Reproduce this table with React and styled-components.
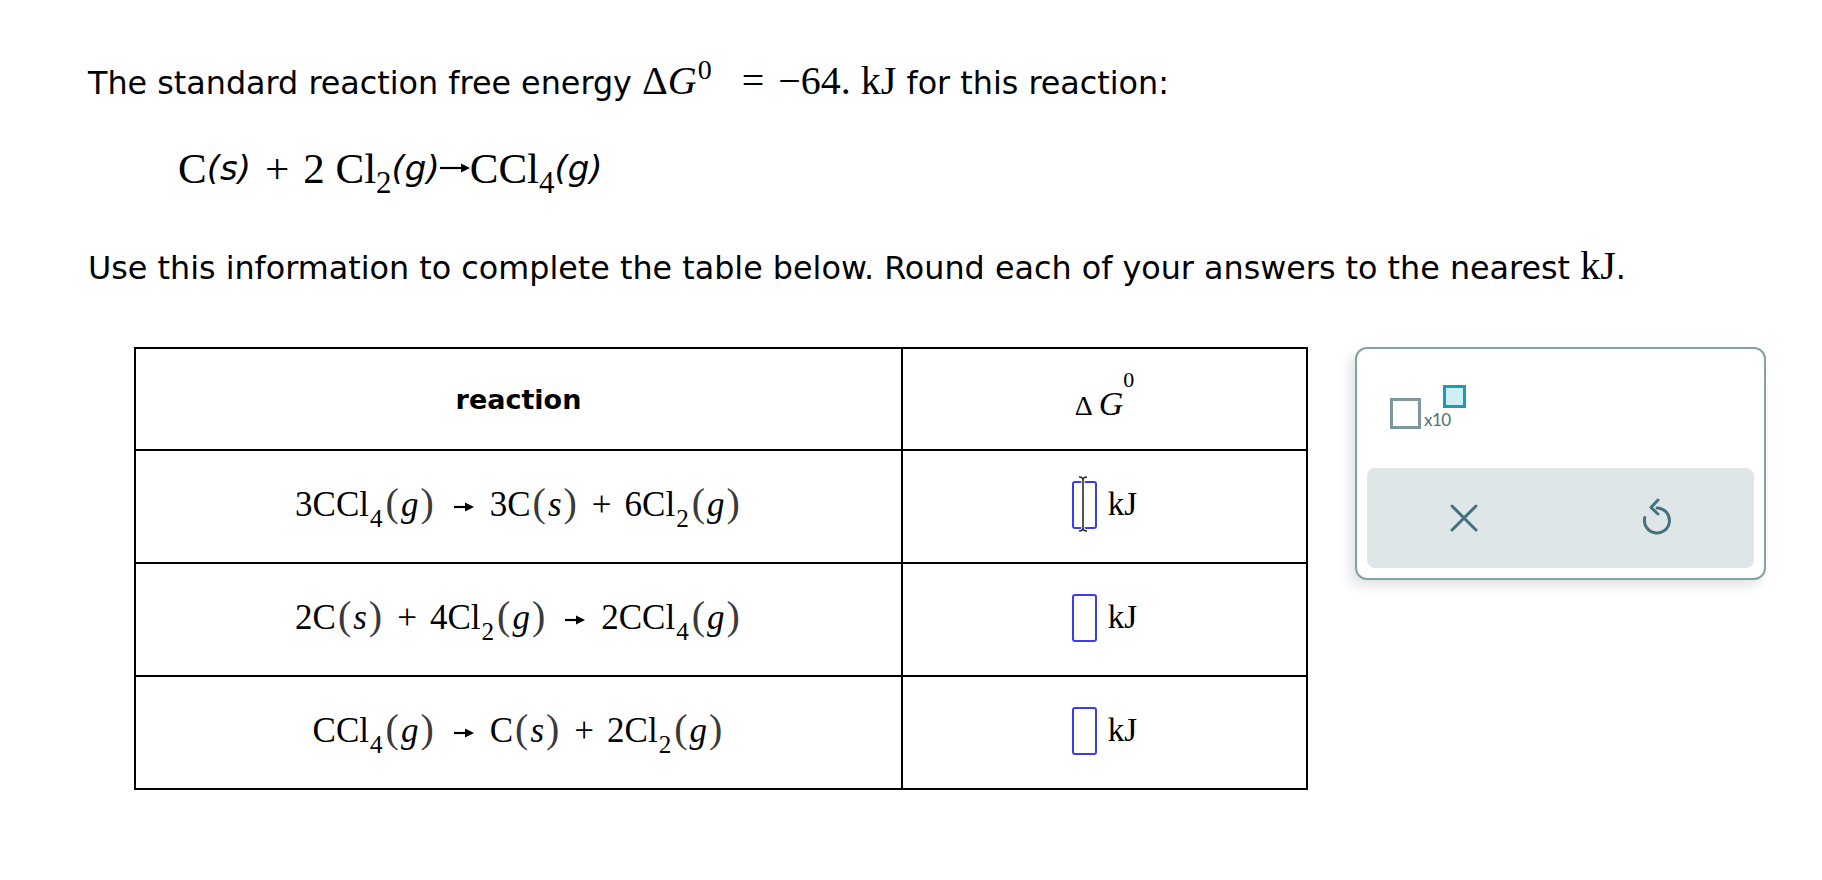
import React from "react";
import styled, { createGlobalStyle } from "styled-components";

const reactions = [
  {
    left: [["3", "CCl", "4", "g"]],
    right: [["3", "C", "", "s"], ["6", "Cl", "2", "g"]],
    cursor: true,
  },
  {
    left: [["2", "C", "", "s"], ["4", "Cl", "2", "g"]],
    right: [["2", "CCl", "4", "g"]],
  },
  {
    left: [["", "CCl", "4", "g"]],
    right: [["", "C", "", "s"], ["2", "Cl", "2", "g"]],
  },
];

function Arrow({ width = 20 }) {
  return (
    <ArrowSvg width={width} height="12" viewBox={`0 0 ${width} 12`}>
      <line x1="0" y1="6" x2={width - 6} y2="6" stroke="#000" strokeWidth="2.2" />
      <path d={`M${width - 9} 1.5 L${width} 6 L${width - 9} 10.5 Z`} fill="#000" />
    </ArrowSvg>
  );
}

function Species({ coef, el, sub, state }) {
  return (
    <>
      {coef}
      {el}
      {sub && <LowSub>{sub}</LowSub>}
      <Paren>(</Paren>
      <i>{state}</i>
      <Paren>)</Paren>
    </>
  );
}

function Side({ items }) {
  return items.map((s, i) => (
    <React.Fragment key={i}>
      {i > 0 && <Plus>+</Plus>}
      <Species coef={s[0]} el={s[1]} sub={s[2]} state={s[3]} />
    </React.Fragment>
  ));
}

export default function App() {
  return (
    <Page>
      <GlobalStyle />
      <Line>
        The standard reaction free energy{" "}
        <M>
          Δ<i>G</i>
          <Sup>0</Sup>
          <Eq>=</Eq>−64. kJ
        </M>{" "}
        for this reaction:
      </Line>

      <EquationLine>
        <BigM>C</BigM>
        <State>(s)</State>
        <BigM>
          <Gap>+</Gap>2 Cl<Sub>2</Sub>
        </BigM>
        <State>(g)</State>
        <Arrow width={30} />
        <BigM>
          CCl<Sub>4</Sub>
        </BigM>
        <State>(g)</State>
      </EquationLine>

      <Line $top={51}>
        Use this information to complete the table below. Round each of your answers to the
        nearest <M>kJ</M>.
      </Line>

      <Body>
        <Table>
          <thead>
            <tr>
              <HeadCell $w={765}>reaction</HeadCell>
              <HeadCell>
                <DeltaG>
                  <Delta>Δ</Delta>
                  <i>G</i>
                  <HighSup>0</HighSup>
                </DeltaG>
              </HeadCell>
            </tr>
          </thead>
          <tbody>
            {reactions.map((r, i) => (
              <tr key={i}>
                <Cell>
                  <Rx>
                    <Side items={r.left} />
                    <RxArrow>
                      <Arrow width={20} />
                    </RxArrow>
                    <Side items={r.right} />
                  </Rx>
                </Cell>
                <Cell>
                  <Answer>
                    <InputBox>
                      {r.cursor && (
                        <Cursor width="12" height="58" viewBox="0 0 12 58">
                          <path
                            d="M2 2 Q6 2 6 5 Q6 2 10 2 M6 5 V53 M2 56 Q6 56 6 53 Q6 56 10 56"
                            fill="none"
                            stroke="#fff"
                            strokeWidth="3.5"
                          />
                          <path
                            d="M2 2 Q6 2 6 5 Q6 2 10 2 M6 5 V53 M2 56 Q6 56 6 53 Q6 56 10 56"
                            fill="none"
                            stroke="#2b2b2b"
                            strokeWidth="1.6"
                          />
                        </Cursor>
                      )}
                    </InputBox>
                    <Unit>kJ</Unit>
                  </Answer>
                </Cell>
              </tr>
            ))}
          </tbody>
        </Table>

        <Panel>
          <PowerTool>
            <BaseBox />
            <Times>x10</Times>
            <ExpBox />
          </PowerTool>
          <Actions>
            <ActionButton type="button" aria-label="clear">
              <svg width="30" height="30" viewBox="0 0 30 30">
                <path
                  d="M3 3 L27 27 M27 3 L3 27"
                  stroke="#47707e"
                  strokeWidth="3"
                  strokeLinecap="round"
                />
              </svg>
            </ActionButton>
            <ActionButton type="button" aria-label="undo">
              <svg width="32" height="40" viewBox="0 0 32 40">
                <path
                  d="M16 10 A12.5 12.5 0 1 1 3.8 19.5"
                  fill="none"
                  stroke="#47707e"
                  strokeWidth="3"
                  strokeLinecap="round"
                />
                <path
                  d="M17 2 L10 9.5 L17 16"
                  fill="none"
                  stroke="#47707e"
                  strokeWidth="3"
                  strokeLinecap="round"
                  strokeLinejoin="round"
                />
              </svg>
            </ActionButton>
          </Actions>
        </Panel>
      </Body>
    </Page>
  );
}

const GlobalStyle = createGlobalStyle`
  body {
    margin: 0;
    background: #ffffff;
    color: #000000;
    font-family: "DejaVu Sans", Verdana, sans-serif;
  }
`;

const Page = styled.div`
  padding: 59px 0 40px 88px;
`;

const Line = styled.p`
  margin: ${(p) => p.$top || 0}px 0 0;
  font-size: 31.8px;
  line-height: 44px;
  white-space: nowrap;
`;

const M = styled.span`
  font-family: "Liberation Serif", "Times New Roman", serif;
  font-size: 40px;
`;

const BigM = styled(M)`
  font-size: 43px;
`;

const Sup = styled.sup`
  font-size: 0.7em;
  line-height: 0;
  vertical-align: 0.55em;
  margin-left: 1px;
`;

const Sub = styled.sub`
  font-size: 0.72em;
  line-height: 0;
  vertical-align: -0.32em;
`;

const LowSub = styled(Sub)`
  vertical-align: -0.45em;
  margin: 0 1px;
`;

const Eq = styled.span`
  margin: 0 14px 0 30px;
`;

const Gap = styled.span`
  margin: 0 14px 0 14px;
`;

const EquationLine = styled.div`
  margin: 38px 0 0 90px;
  height: 50px;
  display: flex;
  align-items: center;
  white-space: nowrap;
`;

const State = styled.span`
  font-style: italic;
  font-size: 34px;
`;

const ArrowSvg = styled.svg`
  display: inline-block;
  flex: none;
`;

const Body = styled.div`
  display: flex;
  align-items: flex-start;
  margin: 57px 0 0 46px;
`;

const Table = styled.table`
  border-collapse: collapse;
  width: 1174px;
  border: 2px solid #000;
`;

const HeadCell = styled.th`
  width: ${(p) => (p.$w ? `${p.$w}px` : "auto")};
  height: 100px;
  border: 2px solid #000;
  font-size: 27px;
  font-weight: bold;
  text-align: center;
  vertical-align: middle;
  padding: 0;
`;

const Cell = styled.td`
  height: 111px;
  border: 2px solid #000;
  text-align: center;
  vertical-align: middle;
  padding: 0;
`;

const DeltaG = styled.span`
  font-family: "Liberation Serif", "Times New Roman", serif;
  font-size: 34px;
  font-weight: normal;
  position: relative;
  top: 2px;
`;

const Delta = styled.span`
  font-size: 28px;
  margin-right: 6px;
`;

const HighSup = styled.sup`
  font-size: 22px;
  line-height: 0;
  vertical-align: 28px;
`;

const Rx = styled.span`
  position: relative;
  top: -4px;
  font-family: "Liberation Serif", "Times New Roman", serif;
  font-size: 35px;
  white-space: nowrap;
`;

const Paren = styled.span`
  font-size: 40px;
  color: #3a3a3a;
  margin: 0 2px;
`;

const Plus = styled.span`
  margin: 0 13px;
`;

const RxArrow = styled.span`
  display: inline-block;
  margin: 0 16px 0 18px;
  vertical-align: 3px;
`;

const Answer = styled.div`
  display: inline-flex;
  align-items: center;
  gap: 11px;
`;

const InputBox = styled.span`
  position: relative;
  display: inline-block;
  box-sizing: border-box;
  width: 25px;
  height: 48px;
  border: 2.5px solid #3b3bf2;
  border-radius: 3px;
`;

const Cursor = styled.svg`
  position: absolute;
  left: 3px;
  top: -8px;
`;

const Unit = styled.span`
  font-family: "Liberation Serif", "Times New Roman", serif;
  font-size: 33px;
`;

const Panel = styled.div`
  box-sizing: border-box;
  width: 411px;
  height: 233px;
  margin-left: 47px;
  padding: 0 10px 10px;
  display: flex;
  flex-direction: column;
  border: 2px solid #84a0a8;
  border-radius: 12px;
  background: #fff;
  box-shadow: -5px 6px 12px rgba(40, 60, 70, 0.14);
`;

const PowerTool = styled.div`
  height: 119px;
  display: flex;
  align-items: flex-start;
  padding: 36px 0 0 23px;
  box-sizing: border-box;
`;

const BaseBox = styled.span`
  box-sizing: border-box;
  width: 31px;
  height: 31px;
  margin-top: 13px;
  border: 3px solid #7d98a1;
`;

const Times = styled.span`
  margin: 25px 0 0 3px;
  font-family: Lato, "Open Sans", sans-serif;
  font-size: 17px;
  line-height: 20px;
  color: #4d6f7c;
  letter-spacing: -0.5px;
`;

const ExpBox = styled.span`
  box-sizing: border-box;
  width: 23px;
  height: 23px;
  margin-left: -8px;
  border: 3px solid #1c9bb7;
  background: #cdeef4;
`;

const Actions = styled.div`
  flex: 1;
  display: grid;
  grid-template-columns: 1fr 1fr;
  background: #dfe6e8;
  border-radius: 8px;
`;

const ActionButton = styled.button`
  display: flex;
  align-items: center;
  justify-content: center;
  background: transparent;
  border: none;
  padding: 0;
  cursor: pointer;
`;
